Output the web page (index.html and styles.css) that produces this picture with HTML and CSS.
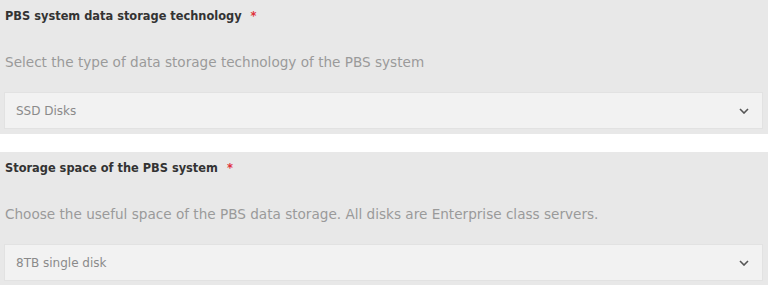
FILE: index.html
```html
<!DOCTYPE html>
<html>
<head>
<meta charset="utf-8">
<link rel="stylesheet" href="styles.css">
</head>
<body>
<div class="form">
  <section class="field">
    <div class="label">PBS system data storage technology <span class="req">*</span></div>
    <div class="desc">Select the type of data storage technology of the PBS system</div>
    <div class="select">
      <span class="value">SSD Disks</span>
      <svg class="chev" width="10" height="6" viewBox="0 0 10 6"><path d="M1 1 L5 5 L9 1" fill="none" stroke="#555" stroke-width="1.6"/></svg>
    </div>
  </section>
  <section class="field">
    <div class="label">Storage space of the PBS system <span class="req">*</span></div>
    <div class="desc">Choose the useful space of the PBS data storage. All disks are Enterprise class servers.</div>
    <div class="select">
      <span class="value">8TB single disk</span>
      <svg class="chev" width="10" height="6" viewBox="0 0 10 6"><path d="M1 1 L5 5 L9 1" fill="none" stroke="#555" stroke-width="1.6"/></svg>
    </div>
  </section>
</div>
</body>
</html>
```
FILE: styles.css
```css
html, body {
  margin: 0;
  padding: 0;
  background: #ffffff;
}
body {
  font-family: "DejaVu Sans", sans-serif;
}
.form {
  display: flex;
  flex-direction: column;
  gap: 18px;
}
.field {
  background: #e8e8e8;
  padding: 8px 5px 5px 4px;
  display: flex;
  flex-direction: column;
}
.label {
  font-size: 11.4px;
  font-weight: bold;
  color: #333333;
  line-height: 16px;
  padding-left: 1px;
}
.req {
  color: #e0303a;
  margin-left: 5px;
}
.desc {
  font-size: 13.6px;
  color: #9a9a9a;
  line-height: 18px;
  margin-top: 29px;
  padding-left: 1px;
}
.select {
  margin-top: 21px;
  height: 37px;
  box-sizing: border-box;
  background: #f2f2f2;
  border: 1px solid #e2e2e2;
  display: flex;
  align-items: center;
  justify-content: space-between;
  padding: 0 13px 0 11px;
}
.value {
  font-size: 12px;
  color: #8a8a8a;
}
.chev {
  display: block;
}
```
